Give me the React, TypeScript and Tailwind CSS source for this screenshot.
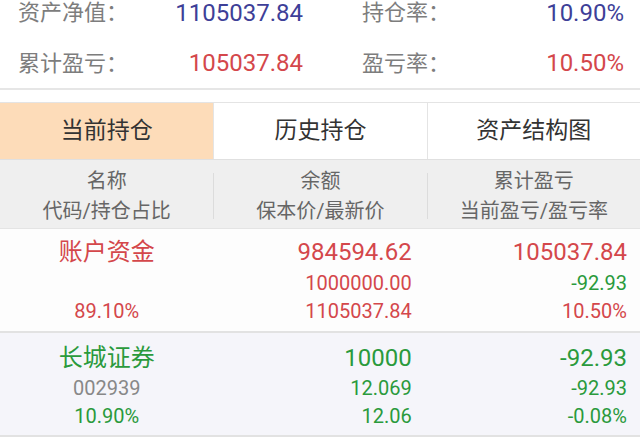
import React from "react";

const font = { fontFamily: 'Roboto, "Noto Sans CJK SC", sans-serif' };

export default function App() {
  return (
    <div className="w-[640px] h-[442px] overflow-hidden bg-white" style={font}>
      {/* summary */}
      <div className="border-b-2 border-[#e6e6e6]">
        <div className="h-[38px] flex">
          <div className="w-1/2 flex items-start justify-between pl-[18px] pr-[17px]">
            <span className="text-[22px] leading-[26px] text-[#7d7d7d]">资产净值：</span>
            <span className="text-[24px] leading-[26px] text-[#3e3f98]">1105037.84</span>
          </div>
          <div className="w-1/2 flex items-start justify-between pl-[42px] pr-[16px]">
            <span className="text-[22px] leading-[26px] text-[#7d7d7d]">持仓率：</span>
            <span className="text-[24px] leading-[26px] text-[#3e3f98]">10.90%</span>
          </div>
        </div>
        <div className="h-[50px] flex">
          <div className="w-1/2 flex items-center justify-between pl-[18px] pr-[17px]">
            <span className="text-[22px] text-[#7d7d7d]">累计盈亏：</span>
            <span className="text-[24px] text-[#d4474b]">105037.84</span>
          </div>
          <div className="w-1/2 flex items-center justify-between pl-[42px] pr-[16px]">
            <span className="text-[22px] text-[#7d7d7d]">盈亏率：</span>
            <span className="text-[24px] text-[#d4474b]">10.50%</span>
          </div>
        </div>
      </div>

      <div className="h-[12px]" />

      {/* tabs */}
      <div className="grid grid-cols-3 h-[57px] border-t border-[#e4e4e4]">
        <div className="bg-[#fddcb9] flex items-center justify-center text-[23px] text-[#333]">当前持仓</div>
        <div className="border-l border-[#e4e4e4] flex items-center justify-center text-[23px] text-[#333]">历史持仓</div>
        <div className="border-l border-[#e4e4e4] flex items-center justify-center text-[23px] text-[#333]">资产结构图</div>
      </div>

      {/* header */}
      <div className="grid grid-cols-3 h-[70px] bg-[#efefef] border-t border-[#e0e0e0] border-b border-b-[#e4e4e4] text-[20px] text-[#666] pt-[3px]">
        <div className="flex flex-col items-center justify-center leading-[30px]">
          <span>名称</span>
          <span>代码/持仓占比</span>
        </div>
        <div className="flex items-center">
          <div className="w-px h-[46px] bg-[#dcdcdc]" />
          <div className="flex-1 flex flex-col items-center justify-center leading-[30px]">
            <span>余额</span>
            <span>保本价/最新价</span>
          </div>
        </div>
        <div className="flex items-center">
          <div className="w-px h-[46px] bg-[#dcdcdc]" />
          <div className="flex-1 flex flex-col items-center justify-center leading-[30px]">
            <span>累计盈亏</span>
            <span>当前盈亏/盈亏率</span>
          </div>
        </div>
      </div>

      {/* row 1 */}
      <div className="grid grid-cols-3 h-[104px] bg-[#fdfdfd] border-b-2 border-[#e2e2e2] pt-[7px]">
        <div className="flex flex-col items-center">
          <span className="h-[32px] leading-[32px] text-[24px] text-[#d4474b]">账户资金</span>
          <span className="h-[30px]" />
          <span className="h-[27px] leading-[27px] text-[20px] text-[#d4474b]">89.10%</span>
        </div>
        <div className="flex flex-col items-end pr-[15px]">
          <span className="h-[32px] leading-[32px] text-[24px] text-[#d4474b]">984594.62</span>
          <span className="h-[30px] leading-[30px] text-[20px] text-[#d4474b]">1000000.00</span>
          <span className="h-[27px] leading-[27px] text-[20px] text-[#d4474b]">1105037.84</span>
        </div>
        <div className="flex flex-col items-end pr-[13px]">
          <span className="h-[32px] leading-[32px] text-[24px] text-[#d4474b]">105037.84</span>
          <span className="h-[30px] leading-[30px] text-[20px] text-[#2a9a3c]">-92.93</span>
          <span className="h-[27px] leading-[27px] text-[20px] text-[#d4474b]">10.50%</span>
        </div>
      </div>

      {/* row 2 */}
      <div className="grid grid-cols-3 h-[104px] bg-[#f5f5fa] border-b-2 border-[#e2e2e2] pt-[9px]">
        <div className="flex flex-col items-center">
          <span className="h-[32px] leading-[32px] text-[24px] text-[#2a9a3c]">长城证券</span>
          <span className="h-[29px] leading-[29px] text-[20px] text-[#888]">002939</span>
          <span className="h-[27px] leading-[27px] text-[20px] text-[#2a9a3c]">10.90%</span>
        </div>
        <div className="flex flex-col items-end pr-[15px]">
          <span className="h-[32px] leading-[32px] text-[24px] text-[#2a9a3c]">10000</span>
          <span className="h-[29px] leading-[29px] text-[20px] text-[#2a9a3c]">12.069</span>
          <span className="h-[27px] leading-[27px] text-[20px] text-[#2a9a3c]">12.06</span>
        </div>
        <div className="flex flex-col items-end pr-[13px]">
          <span className="h-[32px] leading-[32px] text-[24px] text-[#2a9a3c]">-92.93</span>
          <span className="h-[29px] leading-[29px] text-[20px] text-[#2a9a3c]">-92.93</span>
          <span className="h-[27px] leading-[27px] text-[20px] text-[#2a9a3c]">-0.08%</span>
        </div>
      </div>
    </div>
  );
}
